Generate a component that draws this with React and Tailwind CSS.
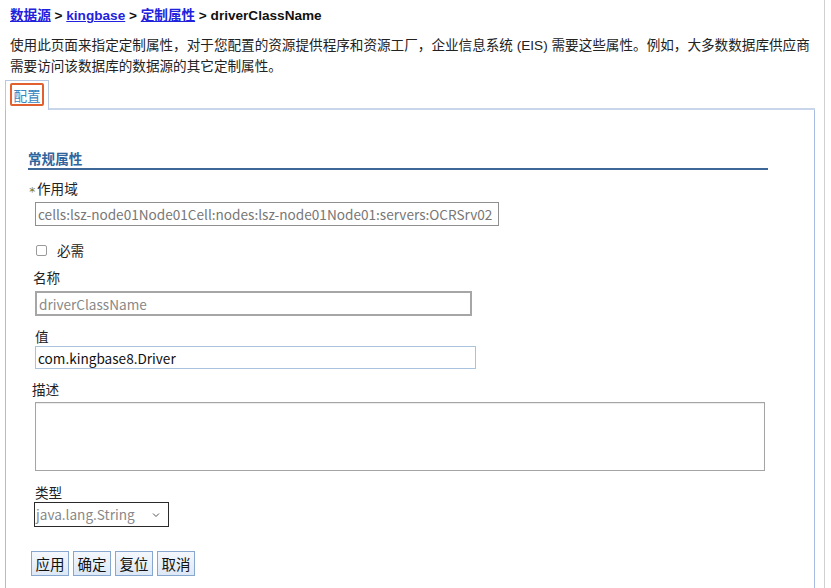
import React from "react";

function Label({ children, className = "" }) {
  return <div className={"h-[20px] leading-[20px] text-[#222] " + className}>{children}</div>;
}

export default function App() {
  return (
    <div className="w-[825px] min-h-[588px] border-r border-[#d0d0d0] bg-white overflow-hidden">
      <div className="pl-[10px] pr-[10px] font-['Liberation_Sans','Noto_Sans_CJK_SC',sans-serif] text-[13.6px] text-[#111]">
        <div className="pt-[6px] h-[26px] leading-[20px] font-bold">
          <a href="#" className="text-[#2222dd] underline">数据源</a>
          <span> &gt; </span>
          <a href="#" className="text-[#2222dd] underline">kingbase</a>
          <span> &gt; </span>
          <a href="#" className="text-[#2222dd] underline">定制属性</a>
          <span> &gt; driverClassName</span>
        </div>
        <p className="mt-[9px] leading-[21px] text-[#222]">
          使用此页面来指定定制属性，对于您配置的资源提供程序和资源工厂，企业信息系统 (EIS) 需要这些属性。例如，大多数数据库供应商需要访问该数据库的数据源的其它定制属性。
        </p>
      </div>

      <div className="mt-[3px] ml-[5px] w-[810px] font-['Noto_Sans_CJK_SC',sans-serif] text-[13.6px]">
        <div className="flex items-end">
          <div className="w-[44px] h-[30px] border-l border-t border-r border-[#b9c8e2] flex items-start justify-center pt-[2px] bg-white">
            <span className="px-[1px] h-[23px] leading-[21px] border-2 border-[#e2602f] rounded-[2px] text-[#3a86c0]">配置</span>
          </div>
          <div className="flex-1 border-b-2 border-[#c9d5ea]"></div>
        </div>
        <div className="border-l border-r border-[#a9bde2] min-h-[480px] pl-[22px] pr-[46px] pt-[38px]">
          <div className="h-[22px] leading-[20px] font-bold text-[#2f659c] border-b-2 border-[#3c6797]">常规属性</div>

          <div className="mt-[8px] flex items-center h-[20px]">
            <span className="text-[#7d7a1c] text-[16px] w-[9px] leading-[16px] translate-y-[4px] font-['DejaVu_Sans',sans-serif] scale-75">*</span>
            <span className="text-[#222] leading-[20px]">作用域</span>
          </div>
          <div className="mt-[4px] ml-[7px] w-[464px] h-[24px] border border-[#8f8f8f] pl-[2px] leading-[22px] text-[#777] whitespace-nowrap overflow-hidden">
            cells:lsz-node01Node01Cell:nodes:lsz-node01Node01:servers:OCRSrv02
          </div>

          <div className="mt-[14px] ml-[8px] h-[20px] flex items-center">
            <span className="w-[11px] h-[11px] border border-[#9a9a9a] rounded-[2px] bg-white"></span>
            <span className="ml-[10px] text-[#222] leading-[20px]">必需</span>
          </div>

          <Label className="mt-[7px] ml-[5px]">名称</Label>
          <div className="mt-[4px] ml-[7px] w-[437px] h-[25px] border-2 border-[#a6a6a6] pl-[2px] leading-[22px] text-[#888]">
            driverClassName
          </div>

          <Label className="mt-[10px] ml-[7px]">值</Label>
          <div className="ml-[7px] w-[441px] h-[23px] border border-[#a9c2de] pl-[2px] leading-[22px] text-[#111]">
            com.kingbase8.Driver
          </div>

          <Label className="mt-[10px] ml-[4px]">描述</Label>
          <div className="mt-[3px] ml-[7px] w-[730px] h-[69px] border border-[#a4a4a4] shadow-[inset_0_1px_1px_rgba(0,0,0,0.08)]"></div>

          <Label className="mt-[11px] ml-[7px]">类型</Label>
          <div className="ml-[6px] w-[135px] h-[25px] border border-[#2a2a2a] flex items-center justify-between pl-[1px] pr-[8px]">
            <span className="text-[#888] leading-[23px]">java.lang.String</span>
            <svg width="8" height="6" viewBox="0 0 8 6" className="mt-[1px]">
              <path d="M1 1.5 L4 4.5 L7 1.5" fill="none" stroke="#555" strokeWidth="1" />
            </svg>
          </div>

          <div className="mt-[24px] ml-[3px] flex gap-[4px]">
            {["应用", "确定", "复位", "取消"].map((t) => (
              <button
                key={t}
                className="h-[25px] w-[38px] border border-[#88a7cf] bg-gradient-to-b from-[#f4f8fd] to-[#dde8f6] text-[#111] text-[14.5px] leading-[23px] whitespace-nowrap text-center"
              >
                {t}
              </button>
            ))}
          </div>
        </div>
      </div>
    </div>
  );
}
